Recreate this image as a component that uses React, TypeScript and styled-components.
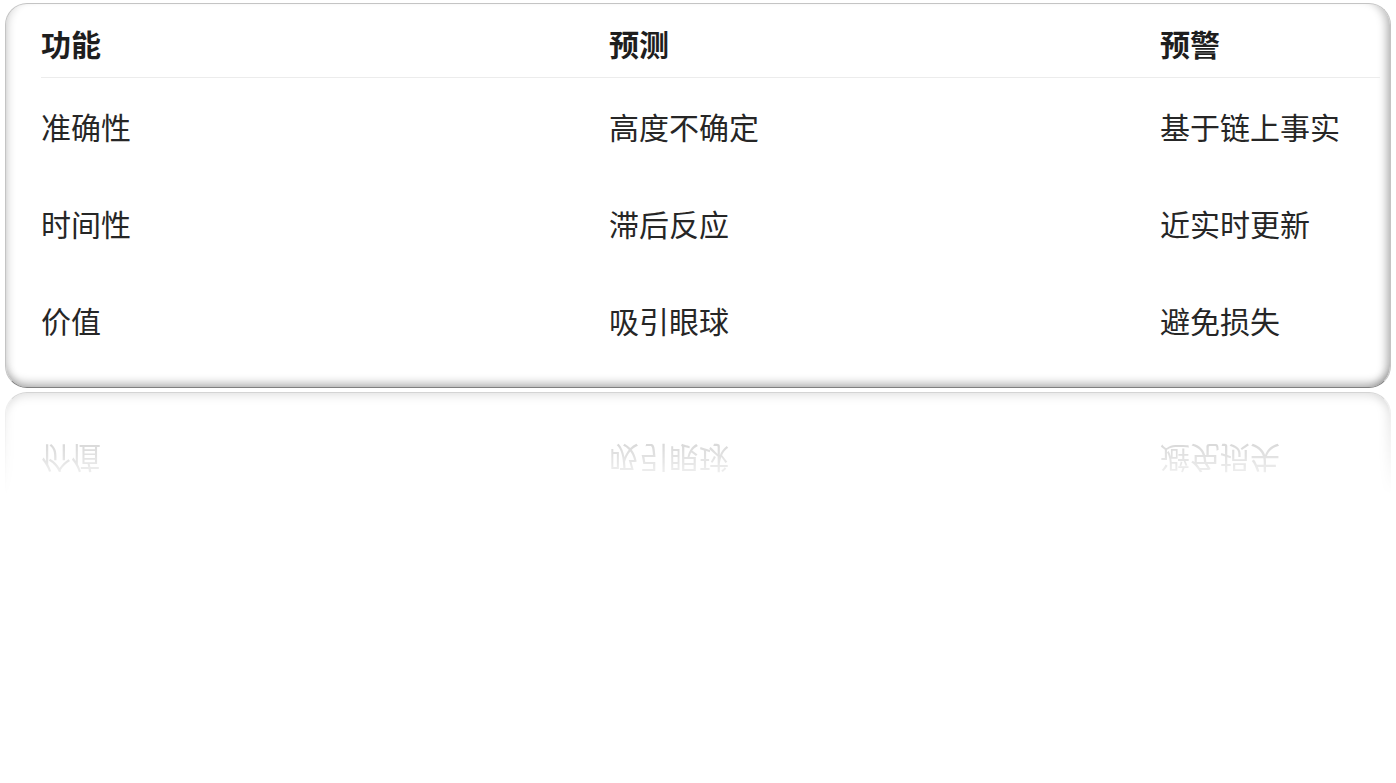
import React from "react";
import styled, { createGlobalStyle } from "styled-components";

const rows = [
  ["准确性", "高度不确定", "基于链上事实"],
  ["时间性", "滞后反应", "近实时更新"],
  ["价值", "吸引眼球", "避免损失"],
];

const lastRow = rows[rows.length - 1];

const App = () => {
  return (
    <>
      <GlobalStyle />
      <Page>
        <Card>
          <HeadRow>
            <HeadCell>功能</HeadCell>
            <HeadCell>预测</HeadCell>
            <HeadCell>预警</HeadCell>
          </HeadRow>
          {rows.map((row) => (
            <Row key={row[0]}>
              {row.map((cell) => (
                <Cell key={cell}>{cell}</Cell>
              ))}
            </Row>
          ))}
        </Card>
        {/* mirrored copy of the card's lower edge, faded out */}
        <Reflection aria-hidden="true">
          <FlippedCard>
            <Row>
              {lastRow.map((cell) => (
                <Cell key={cell}>{cell}</Cell>
              ))}
            </Row>
          </FlippedCard>
        </Reflection>
      </Page>
    </>
  );
};

export default App;

const GlobalStyle = createGlobalStyle`
  html, body {
    margin: 0;
    background: #ffffff;
  }
  body {
    font-family: "Noto Sans CJK SC", "Noto Sans", sans-serif;
  }
`;

const Page = styled.div`
  padding: 3px 5px 0 5px;
`;

const Card = styled.div`
  box-sizing: border-box;
  width: 1386px;
  padding: 17px 10px 18px 35px;
  background: #ffffff;
  border: 1px solid #c4c4c4;
  border-bottom-color: #808080;
  border-radius: 22px;
  box-shadow: inset 0 -9px 9px -5px rgba(0, 0, 0, 0.28),
    inset 9px 0 9px -7px rgba(0, 0, 0, 0.16),
    inset -10px 0 9px -6px rgba(0, 0, 0, 0.26);
`;

const Reflection = styled.div`
  margin-top: 4px;
  pointer-events: none;
  -webkit-mask-image: linear-gradient(
    to bottom,
    rgba(0, 0, 0, 0.34),
    rgba(0, 0, 0, 0.12) 58%,
    transparent 88%
  );
  mask-image: linear-gradient(
    to bottom,
    rgba(0, 0, 0, 0.34),
    rgba(0, 0, 0, 0.12) 58%,
    transparent 88%
  );
`;

const FlippedCard = styled(Card)`
  padding-top: 0;
  transform: scaleY(-1);
`;

const Grid = styled.div`
  display: grid;
  grid-template-columns: 568px 551px 1fr;
  font-size: 30px;
  line-height: 45px;
`;

const HeadRow = styled(Grid)`
  padding-bottom: 11px;
  border-bottom: 1px solid #ececec;
`;

const Row = styled(Grid)`
  padding: 26px 0;
`;

const HeadCell = styled.div`
  font-weight: 700;
  color: #1e1e1e;
`;

const Cell = styled.div`
  font-weight: 400;
  color: #262626;
`;
